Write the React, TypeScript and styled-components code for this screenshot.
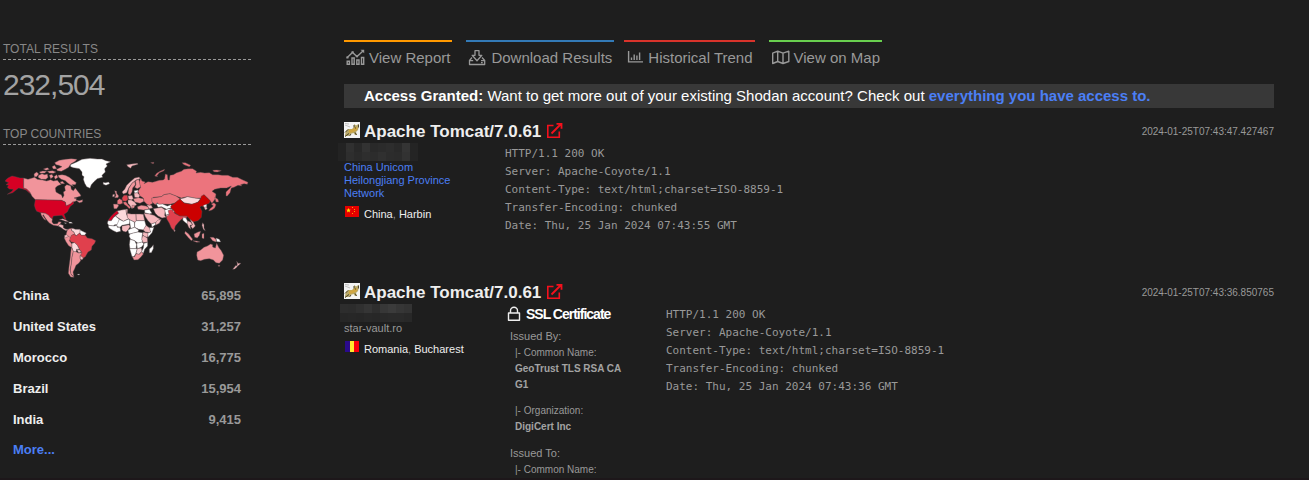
import React from "react";
import styled, { createGlobalStyle } from "styled-components";

const GlobalStyle = createGlobalStyle`
  * { box-sizing: border-box; }
  body {
    margin: 0;
    background: #1e1e1e;
    color: #999;
    font-family: "Liberation Sans", Arial, sans-serif;
    font-size: 11px;
  }
  a { color: inherit; text-decoration: none; }
`;

const Page = styled.div`
  display: flex;
  gap: 93px;
  min-height: 100vh;
  padding: 40px 35px 0 3px;
  border-bottom: 2px solid #1d171a;
`;

const Sidebar = styled.aside`
  flex: 0 0 248px;
  padding-top: 2px;
`;

const SideHeading = styled.h2`
  margin: 0;
  padding-bottom: 3px;
  border-bottom: 1px dashed #999;
  font-size: 12px;
  font-weight: 400;
  line-height: 14px;
  color: #888;
`;

const Total = styled.p`
  margin: 0 0 17px;
  font-size: 30px;
  line-height: 50px;
  letter-spacing: -1px;
  color: #a3a3a3;
`;

const MapDrawing = styled.svg`
  display: block;
  width: 100%;
  margin: 5px 0 1px;
`;

const CountryList = styled.ul`
  list-style: none;
  margin: 0;
  padding: 0 10px;
  font-size: 13px;
  font-weight: 700;
`;

const CountryRow = styled.li`
  display: flex;
  justify-content: space-between;
  line-height: 30px;
  padding-bottom: 1px;
`;

const CountryName = styled.a`
  color: #eee;
`;

const More = styled.a`
  display: block;
  padding: 0 10px;
  font-size: 13px;
  font-weight: 700;
  line-height: 28px;
  color: #4b7ff5;
`;

const Main = styled.main`
  flex: 1;
  min-width: 0;
`;

const Tabs = styled.nav`
  display: flex;
  gap: 14px;
`;

const TabGroup = styled.div`
  display: flex;
  gap: 10px;
`;

const Tab = styled.a<{ $line: string }>`
  display: flex;
  align-items: center;
  gap: 4px;
  padding: 0 2px;
  border-top: 2px solid ${(p) => p.$line};
  font-size: 15px;
  line-height: 32px;
  white-space: nowrap;
`;

const TabIcon = styled.svg`
  flex: none;
  height: 18px;
  fill: none;
  stroke: #999;
`;

const Banner = styled.p`
  margin: 10px 0 13px;
  padding: 0 20px;
  background: #383838;
  color: #fff;
  font-size: 15px;
  line-height: 24px;
`;

const BannerLink = styled.a`
  color: #4b7ff5;
  font-weight: 700;
`;

const Result = styled.article`
  & + & {
    margin-top: 47px;
  }
`;

const ResultHead = styled.header`
  display: flex;
  align-items: flex-start;
  gap: 4px;
  line-height: 22px;
`;

const ResultTitle = styled.h3`
  margin: 0;
  color: #eee;
  font-size: 17px;
`;

const OpenLink = styled.a`
  display: flex;
`;

const Time = styled.time`
  margin-left: auto;
  font-size: 10px;
`;

const Columns = styled.div<{ $cert?: boolean }>`
  display: grid;
  grid-template-columns: ${(p) => (p.$cert ? "161px 161px 1fr" : "161px 1fr")};
`;

const HostInfo = styled.div`
  padding-right: 40px;
  line-height: 13px;
`;

const Redacted = styled.div`
  display: flex;
  height: 18px;
  margin-left: -6px;
`;

const HostLink = styled.a<{ $accent?: boolean }>`
  display: block;
  color: ${(p) => (p.$accent ? "#4b7ff5" : "#999")};
`;

const Place = styled.div`
  display: flex;
  align-items: flex-start;
  gap: 5px;
  margin-top: 6px;
  padding-left: 1px;
  white-space: nowrap;
`;

const PlaceText = styled.span`
  padding-top: 2px;
`;

const PlaceLink = styled.a`
  color: #eee;
`;

const Response = styled.pre`
  margin: 0;
  padding-top: 2px;
  font-family: "DejaVu Sans Mono", monospace;
  font-size: 11px;
  line-height: 18px;
`;

const Certificate = styled.section`
  padding: 0 30px 0 2px;
`;

const CertHeading = styled.h4`
  display: flex;
  align-items: center;
  gap: 5px;
  margin: 0 0 4px;
  color: #fff;
  font-size: 14px;
  line-height: 20px;
  letter-spacing: -1px;
`;

const CertParty = styled.div`
  padding-left: 3px;
  line-height: 17px;

  & + & {
    padding-top: 10px;
  }
`;

const CertField = styled.div`
  padding-left: 5px;
  font-size: 10px;
  line-height: 16px;

  & + & {
    padding-top: 10px;
  }
`;

const CertValue = styled.strong`
  display: block;
  color: #a3a3a3;
`;

const tones = {
  white: "#ffffff",
  faint: "#fcd9dc",
  light: "#f6b9be",
  soft: "#f1949b",
  mid: "#ec747d",
  strong: "#e0404d",
  high: "#d60024",
  top: "#cc0000",
};

const land: [keyof typeof tones, string][] = [
  // North America
  ["high", "17,90 24,84 36,78 46,80 60,84 71,84 71,114 80,117 90,127 92,132 78,120 66,116 56,114 48,120 38,128 22,133 36,124 40,118 28,117 22,112 26,106 18,104 26,98 16,94"],
  ["soft", "71,84 84,88 104,82 112,88 128,90 140,93 152,89 160,93 172,91 178,98 184,103 172,108 166,114 168,126 178,132 184,134 188,144 192,136 190,126 196,122 194,110 200,104 212,107 214,118 220,122 226,114 232,122 240,132 243,138 230,142 222,144 230,146 228,150 238,152 248,149 247,156 238,158 230,152 222,155 216,160 206,166 198,168 196,156 184,151 106,149 96,139 90,127 80,117 71,114"],
  ["soft", "116,76 126,71 134,74 142,72 144,82 138,88 124,88 114,82"],
  ["soft", "102,72 110,66 116,72 110,80 103,80"],
  ["soft", "118,66 128,63 140,64 134,69 122,70"],
  ["soft", "142,64 158,62 168,66 160,70 148,69"],
  ["soft", "148,76 156,73 160,80 152,86"],
  ["soft", "162,80 170,74 174,82 166,88"],
  ["soft", "130,57 142,53 148,58 138,61"],
  ["soft", "156,50 164,46 170,56 160,57"],
  ["soft", "174,76 186,74 196,76 208,82 218,90 229,98 226,104 216,104 222,110 210,104 202,98 196,92 184,88 176,82"],
  ["soft", "164,38 178,31 196,28 214,26 231,28 226,34 212,42 206,52 196,58 184,64 172,62 170,58 186,50 176,46 168,44"],
  ["soft", "180,96 188,94 194,101 184,101"],
  ["white", "211,44 230,36 246,28 270,25 292,27 306,27 318,32 332,35 318,42 322,48 314,56 316,66 306,76 308,82 292,86 282,95 274,104 270,115 260,110 254,100 250,88 252,80 246,76 246,66 238,56 220,53 212,50"],
  ["white", "309,97 316,98 326,96 329,101 318,106 310,103"],
  ["high", "106,149 184,151 196,157 198,168 212,161 220,154 221,161 211,169 206,178 202,186 192,193 198,208 194,208 186,196 172,197 160,198 157,206 150,202 146,196 140,194 136,190 122,188 110,184 106,176 103,166"],
  ["soft", "122,188 136,190 146,196 150,202 157,207 156,216 161,222 172,221 176,215 184,216 180,223 174,228 160,226 148,219 142,212 136,204 130,194 128,196 138,211 132,208 124,196"],
  ["light", "174,228 180,223 190,226 190,233 198,238 206,237 198,242 190,238 182,232"],
  ["light", "178,209 188,206 198,210 206,215 196,214 186,210"],
  ["white", "206,216 214,216 218,220 208,220"],
  ["white", "193,218 200,219 196,221"],
  // South America
  ["soft", "202,240 208,236 218,234 213,240 222,246 224,252 216,256 214,266 208,262 198,254"],
  ["faint", "213,240 218,235 226,238 240,238 244,245 236,252 228,258 224,252 222,246"],
  ["white", "240,240 248,244 259,249 254,256 244,256 240,249"],
  ["light", "194,256 200,254 206,259 198,267 193,264"],
  ["soft", "193,265 206,259 214,265 208,272 216,282 216,293 206,287 198,275"],
  ["strong", "209,268 214,256 224,252 228,258 238,250 244,256 256,256 262,264 276,266 287,272 284,280 276,289 274,300 264,306 256,320 248,325 240,314 244,306 238,298 232,286 222,278 212,275"],
  ["faint", "216,280 224,278 232,286 238,298 230,298 228,306 220,306 216,293"],
  ["light", "230,298 240,300 244,307 236,309"],
  ["soft", "214,292 220,304 216,322 214,342 210,360 214,374 222,382 212,381 205,370 207,350 210,328"],
  ["soft", "220,304 228,305 236,309 246,308 240,318 242,332 236,340 228,346 224,356 219,366 222,381 213,372 211,360 214,342 216,322"],
  ["light", "241,316 250,324 246,330 240,326"],
  ["white", "232,373 239,372 238,375 234,375"],
  // Africa
  ["high", "340,192 350,183 356,182 356,190 346,196 340,203 334,212 324,212 332,200"],
  ["faint", "352,183 364,180 378,178 380,194 386,206 370,214 346,198 356,190"],
  ["light", "378,177 383,178 382,190 379,188"],
  ["light", "381,190 394,192 408,192 409,216 403,216 388,209 382,202"],
  ["light", "408,192 420,192 430,193 434,212 409,212"],
  ["white", "324,212 334,212 340,203 346,198 358,208 356,224 344,224 340,228 326,226 322,220"],
  ["white", "358,208 370,214 386,207 390,212 388,222 376,224 366,226 360,232 352,230 350,226"],
  ["white", "326,226 342,228 350,226 352,232 360,232 362,244 350,247 340,242 330,236 325,231"],
  ["light", "366,228 388,224 390,230 384,240 378,246 370,244 366,240"],
  ["white", "388,209 403,216 404,232 392,236 390,222"],
  ["white", "409,212 434,212 438,226 432,240 416,238 404,232 404,218"],
  ["light", "438,226 448,233 456,240 448,248 436,246 430,240"],
  ["white", "448,233 462,232 456,248 444,262 442,250 452,246"],
  ["white", "384,240 392,236 404,232 416,240 414,246 398,250 390,252 386,250"],
  ["light", "430,246 444,250 443,262 434,260 428,254"],
  ["white", "390,252 400,249 414,246 428,248 426,262 428,276 414,280 404,272 392,268 387,258"],
  ["light", "428,256 442,264 443,276 430,278 425,268"],
  ["white", "390,268 404,272 410,284 408,296 390,296 388,284"],
  ["white", "410,280 426,276 432,282 424,292 412,296"],
  ["white", "432,280 443,277 443,288 434,298 430,310 424,306 430,294"],
  ["white", "389,296 412,296 408,310 402,320 396,320"],
  ["faint", "412,296 424,294 426,304 416,314 408,310"],
  ["soft", "397,320 404,320 408,311 418,313 425,305 430,312 422,322 414,329 402,330"],
  ["white", "456,290 460,284 460,296 454,308 448,308 448,297"],
  // Europe
  ["soft", "340,162 354,163 356,167 350,176 342,176"],
  ["mid", "352,152 358,146 366,150 368,160 360,163 352,162"],
  ["soft", "344,122 350,124 350,130 356,138 354,143 344,143 348,136"],
  ["light", "338,134 343,132 344,139 338,141"],
  ["strong", "366,144 372,136 382,136 384,148 378,154 368,152"],
  ["mid", "370,156 378,156 384,164 392,172 388,176 380,168 372,163"],
  ["light", "366,126 374,118 380,106 390,96 404,84 418,81 420,87 408,90 396,100 386,114 380,128 370,132"],
  ["soft", "384,130 386,116 396,100 404,94 406,104 398,114 396,126 390,136"],
  ["soft", "406,92 416,88 420,100 422,110 412,116 404,112 408,104"],
  ["light", "384,138 396,136 400,146 394,150 386,148"],
  ["white", "402,122 414,120 414,128 404,130"],
  ["light", "402,130 412,128 420,136 416,144 404,142"],
  ["soft", "400,146 416,143 430,146 432,154 420,160 404,156"],
  ["light", "384,150 394,150 404,156 410,164 404,168 396,176 388,164 384,160"],
  ["soft", "396,166 404,166 402,174 396,174"],
  ["soft", "412,170 424,166 438,168 446,172 446,178 430,180 414,178"],
  ["light", "440,164 454,166 458,174 448,176"],
  // Asia
  ["mid", "422,84 426,93 436,96 432,101 444,95 458,97 468,94 478,91 490,90 494,86 496,72 502,74 504,90 508,90 510,76 520,74 530,68 544,64 552,58 566,56 578,56 590,64 588,69 602,67 614,69 628,68 638,74 654,74 666,76 684,76 698,82 712,82 724,88 744,97 742,103 732,101 722,104 726,108 714,106 702,112 694,114 690,128 682,138 678,138 678,126 690,114 694,108 680,114 662,114 644,118 636,124 648,132 646,146 636,160 630,152 622,144 612,134 604,144 588,145 562,140 544,144 528,138 510,131 492,134 484,140 460,142 456,150 458,160 448,166 440,162 432,154 430,144 420,138 414,124 422,112 418,96"],
  ["mid", "464,78 470,70 480,64 494,58 492,62 478,68 470,78 474,80"],
  ["mid", "546,38 556,38 572,46 568,50 552,44"],
  ["mid", "638,61 650,60 664,62 652,66 642,65"],
  ["light", "380,44 394,42 412,40 414,43 396,48 392,55 384,50"],
  ["mid", "452,38 462,37 460,41"],
  ["mid", "455,144 484,140 492,134 510,131 528,138 540,146 536,154 522,160 510,163 488,162 478,166 472,158 466,164 456,156"],
  ["white", "468,160 478,163 488,162 502,168 512,164 520,168 512,174 500,178 484,170 474,172"],
  ["light", "460,176 472,174 484,172 496,180 494,196 498,202 486,204 474,198 466,190"],
  ["white", "494,180 506,176 518,176 514,190 498,196"],
  ["light", "498,196 514,190 518,180 526,182 520,192 514,206 500,202"],
  ["white", "434,180 448,178 456,190 448,192 434,188"],
  ["light", "432,190 448,192 462,196 474,204 480,206 474,216 454,222 444,212 436,200"],
  ["white", "454,222 466,218 468,223 456,232"],
  ["light", "468,216 474,210 484,208 478,220 466,226"],
  ["strong", "504,182 514,178 524,190 540,198 562,198 558,206 546,206 536,216 526,228 522,242 514,234 508,220 500,206 500,200 508,194"],
  ["light", "522,238 526,242 523,246"],
  ["faint", "540,146 552,144 562,140 588,145 602,146 594,156 578,163 554,159 544,152"],
  ["top", "512,168 524,160 532,152 540,147 552,159 574,163 594,157 602,146 604,138 612,134 624,146 631,152 628,160 620,163 612,170 604,168 600,172 606,184 604,202 594,212 578,216 570,208 560,198 540,198 526,190 520,180 513,174"],
  ["white", "550,202 558,204 562,212 568,222 562,222 554,216 548,210"],
  ["light", "562,212 572,216 578,224 570,226 572,238 566,232 562,222"],
  ["light", "570,208 580,216 586,228 578,236 572,228 578,224"],
  ["light", "612,172 618,168 622,176 616,180"],
  ["white", "610,166 620,163 620,170 612,172"],
  ["mid", "634,162 642,158 648,164 644,174 636,180 626,183 630,176 640,168"],
  ["mid", "644,142 654,148 656,156 648,156"],
  ["light", "608,218 612,224 612,234 616,242 610,238 606,226"],
  ["soft", "556,244 566,252 578,268 574,272 564,262 554,250"],
  ["soft", "578,272 590,273 600,276 590,277"],
  ["soft", "582,252 594,246 602,244 598,256 592,264 584,262"],
  ["soft", "606,252 612,250 612,266 606,264"],
  ["soft", "630,262 640,262 648,268 648,276 638,272"],
  ["white", "648,264 658,268 662,276 650,275"],
  // Oceania
  ["soft", "591,306 602,300 612,292 622,288 632,282 638,284 638,291 646,294 650,280 656,292 664,302 671,316 668,330 658,340 648,338 640,330 628,326 614,328 602,332 593,330 590,316"],
  ["soft", "654,346 660,346 657,350"],
  ["light", "710,334 714,340 723,340 716,346 710,350 712,342"],
  ["light", "708,346 712,350 704,357 698,358"],
];

const WorldMap = () => (
  <MapDrawing viewBox="9 0 744 390" role="img" aria-label="Results by country">
    {land.map(([tone, points]) => (
      <polygon
        key={points}
        points={points}
        fill={tones[tone]}
        stroke="#5c4c4e"
        strokeWidth="1.2"
        strokeLinejoin="round"
      />
    ))}
  </MapDrawing>
);

const ReportIcon = () => (
  <TabIcon width="19" viewBox="0 0 19 18" strokeWidth="1.4" aria-hidden="true">
    <path d="M1.200 15.300v-3h2.200v3zM6 15.300v-6.300h2.200v6.300zM10.800 15.300v-4.300H13v4.300zM15.500 15.300V8.500h2.200v6.800z" />
    <path d="M1.200 8.500L6.500 3.500l4.500 4 6-5.500" />
    <path fill="#999" stroke="none" d="M.3 7.500h2.200v2H.3zM5.500 2.200h2.200v2H5.500zM9.800 6.200H12v2H9.800zM14.500.8h3.700v3.400z" />
  </TabIcon>
);

const DownloadIcon = () => (
  <TabIcon width="19" viewBox="0 0 19 18" strokeWidth="1.300" strokeLinejoin="round" aria-hidden="true">
    <path d="M7 1.700h4v4.600h2.800L9 11.700 4.200 6.300H7z" />
    <path d="M4 8.500L1.500 11.500v4h15.200v-4L14 8.500M1.700 11.700h3.500M13 11.700h3.500M13 13.700h1.700" />
  </TabIcon>
);

const TrendIcon = () => (
  <TabIcon width="18" viewBox="0 0 18 18" strokeWidth="1.400" aria-hidden="true">
    <path d="M2.600 2v10.900h14.400M5.500 11V8.500M8.200 11V5.500M10.900 11V6.500M13.600 11V3.500" />
  </TabIcon>
);

const MapIcon = () => (
  <TabIcon width="19" viewBox="0 0 19 18" strokeWidth="1.400" strokeLinejoin="round" aria-hidden="true">
    <path d="M1.700 4.200L6.700 2.200l5.300 2 5.800-2v10.300l-5.800 2-5.300-2-5 2zM6.700 2.200v10.300M12 4.200v10.300" />
  </TabIcon>
);

const TomcatIcon = () => (
  <svg width="16" height="17" viewBox="0 -1 16 17" aria-hidden="true">
    <path fill="#f4f4f4" d="M0 0h16v16H0z" />
    <path fill="#b9a968" d="M1 13l1-4 2-2 4 0 2-2V2l2 1.500L14.500 2v4L14 8l-2 2 1 3-2 0-1.500-2-3 1-2 2H2l-1 1z" />
    <path fill="#d1a641" d="M5 8l4-1 2-2 2.500.5-1 3L8 10.500 5 11z" />
    <path fill="none" stroke="#4d452a" strokeWidth="1" d="M1 10.500l3-3M1 14.500l4-3M10 3v2.500M14.500 2.500v3M11 6h1M7 12l-1.500 2M11 10.500l1.500 2.500" />
    <path fill="none" stroke="#a9a9a9" strokeWidth=".7" d="M1 3l5 2M1 1.500l4 .5" />
  </svg>
);

const OpenIcon = () => (
  <svg width="18" height="18" viewBox="0 0 18 18" fill="none" stroke="#f5101c" aria-hidden="true">
    <path strokeWidth="1.600" d="M8.500 4.500H2.800v11.700h11.500V10.500" />
    <path strokeWidth="1.800" d="M6.500 12.500L16 3M11.500 2.800h5v5" />
  </svg>
);

const LockIcon = () => (
  <svg width="14" height="16" viewBox="0 0 14 16" fill="none" stroke="#eee" strokeWidth="1.400" strokeLinejoin="round" aria-hidden="true">
    <path d="M1.500 7h11v7.300h-11zM3.500 7V4.800a3.500 3.500 0 0 1 7 0V7" />
  </svg>
);

const ChinaFlag = () => (
  <svg width="14" height="11" viewBox="0 0 14 11" aria-hidden="true">
    <path fill="#e60000" d="M0 0h14v11H0z" />
    <path fill="#ffdf00" d="M3.500 2l.7 1.500 1.500.2-1.100 1.100.3 1.600-1.400-.8-1.400.8.300-1.600-1.100-1.100 1.500-.2z" />
    <path fill="#f8a000" d="M7 1h1v1H7zM9 3h1v1H9zM9 5h1v1H9zM7 7h1v1H7z" />
  </svg>
);

const RomaniaFlag = () => (
  <svg width="14" height="11" viewBox="0 0 14 11" aria-hidden="true">
    <path fill="#2a0a8c" d="M0 0h5v11H0z" />
    <path fill="#ffe92e" d="M5 0h4v11H5z" />
    <path fill="#f8000c" d="M9 0h5v11H9z" />
  </svg>
);

const Mosaic = ({ rows, inset = 0 }: { rows: string[][]; inset?: number }) => {
  const width = rows[0].length * 8 + inset;
  return (
    <svg width={width} height={rows.length * 9} aria-hidden="true">
      {rows.map((row, y) =>
        row.map((shade, x) => (
          <rect key={`${x}-${y}`} x={inset + x * 8} y={y * 9} width="8" height="9" fill={shade} />
        ))
      )}
    </svg>
  );
};

const firstAddress = [
  ["#232323", "#303030", "#282828", "#323232", "#292929", "#2b2b2b", "#2d2d2d", "#292929", "#343434", "#242424"],
  ["#232323", "#2e2e2e", "#2a2a2a", "#2e2e2e", "#2c2c2c", "#303030", "#2c2c2c", "#2b2b2b", "#323232", "#242424"],
];

const secondAddress = [
  ["#2d2d2d", "#2c2c2c", "#303030", "#353535", "#2e2e2e", "#373737", "#3b3b3b", "#363636", "#333333"],
  ["#262626", "#272727", "#262626", "#282828", "#272727", "#292929", "#2a2a2a", "#2a2a2a", "#282828"],
];

const countries = [
  ["China", "65,895"],
  ["United States", "31,257"],
  ["Morocco", "16,775"],
  ["Brazil", "15,954"],
  ["India", "9,415"],
];

const responseText = (seconds: string) => `HTTP/1.1 200 OK
Server: Apache-Coyote/1.1
Content-Type: text/html;charset=ISO-8859-1
Transfer-Encoding: chunked
Date: Thu, 25 Jan 2024 07:43:${seconds} GMT`;

const Heading = ({ time }: { time: string }) => (
  <ResultHead>
    <TomcatIcon />
    <ResultTitle>
      <a href="#host">Apache Tomcat/7.0.61</a>
    </ResultTitle>
    <OpenLink href="#open" aria-label="Open site">
      <OpenIcon />
    </OpenLink>
    <Time>{time}</Time>
  </ResultHead>
);

export default function App() {
  return (
    <>
      <GlobalStyle />
      <Page>
        <Sidebar>
          <SideHeading>TOTAL RESULTS</SideHeading>
          <Total>232,504</Total>
          <SideHeading>TOP COUNTRIES</SideHeading>
          <WorldMap />
          <CountryList>
            {countries.map(([name, count]) => (
              <CountryRow key={name}>
                <CountryName href="#country">{name}</CountryName>
                <span>{count}</span>
              </CountryRow>
            ))}
          </CountryList>
          <More href="#more">More...</More>
        </Sidebar>
        <Main>
          <Tabs>
            <Tab href="#report" $line="#f90">
              <ReportIcon />
              View Report
            </Tab>
            <TabGroup>
              <Tab href="#download" $line="#337ab7">
                <DownloadIcon />
                Download Results
              </Tab>
              <Tab href="#trend" $line="#d9332b">
                <TrendIcon />
                Historical Trend
              </Tab>
            </TabGroup>
            <Tab href="#map" $line="#69cf4f">
              <MapIcon />
              View on Map
            </Tab>
          </Tabs>
          <Banner>
            <strong>Access Granted:</strong> Want to get more out of your existing Shodan account? Check out{" "}
            <BannerLink href="#access">everything you have access to.</BannerLink>
          </Banner>
          <Result>
            <Heading time="2024-01-25T07:43:47.427467" />
            <Columns>
              <HostInfo>
                <Redacted>
                  <Mosaic rows={firstAddress} />
                </Redacted>
                <HostLink href="#org" $accent>
                  China Unicom Heilongjiang Province Network
                </HostLink>
                <Place>
                  <ChinaFlag />
                  <PlaceText>
                    <PlaceLink href="#cn">China</PlaceLink>, <PlaceLink href="#harbin">Harbin</PlaceLink>
                  </PlaceText>
                </Place>
              </HostInfo>
              <Response>{responseText("55")}</Response>
            </Columns>
          </Result>
          <Result>
            <Heading time="2024-01-25T07:43:36.850765" />
            <Columns $cert>
              <HostInfo>
                <Redacted>
                  <Mosaic rows={secondAddress} inset={2} />
                </Redacted>
                <HostLink href="#domain">star-vault.ro</HostLink>
                <Place>
                  <RomaniaFlag />
                  <PlaceText>
                    <PlaceLink href="#ro">Romania</PlaceLink>, <PlaceLink href="#bucharest">Bucharest</PlaceLink>
                  </PlaceText>
                </Place>
              </HostInfo>
              <Certificate>
                <CertHeading>
                  <LockIcon />
                  SSL Certificate
                </CertHeading>
                <CertParty>
                  Issued By:
                  <CertField>
                    |- Common Name: <CertValue>GeoTrust TLS RSA CA G1</CertValue>
                  </CertField>
                  <CertField>
                    |- Organization: <CertValue>DigiCert Inc</CertValue>
                  </CertField>
                </CertParty>
                <CertParty>
                  Issued To:
                  <CertField>|- Common Name:</CertField>
                </CertParty>
              </Certificate>
              <Response>{responseText("36")}</Response>
            </Columns>
          </Result>
        </Main>
      </Page>
    </>
  );
}
